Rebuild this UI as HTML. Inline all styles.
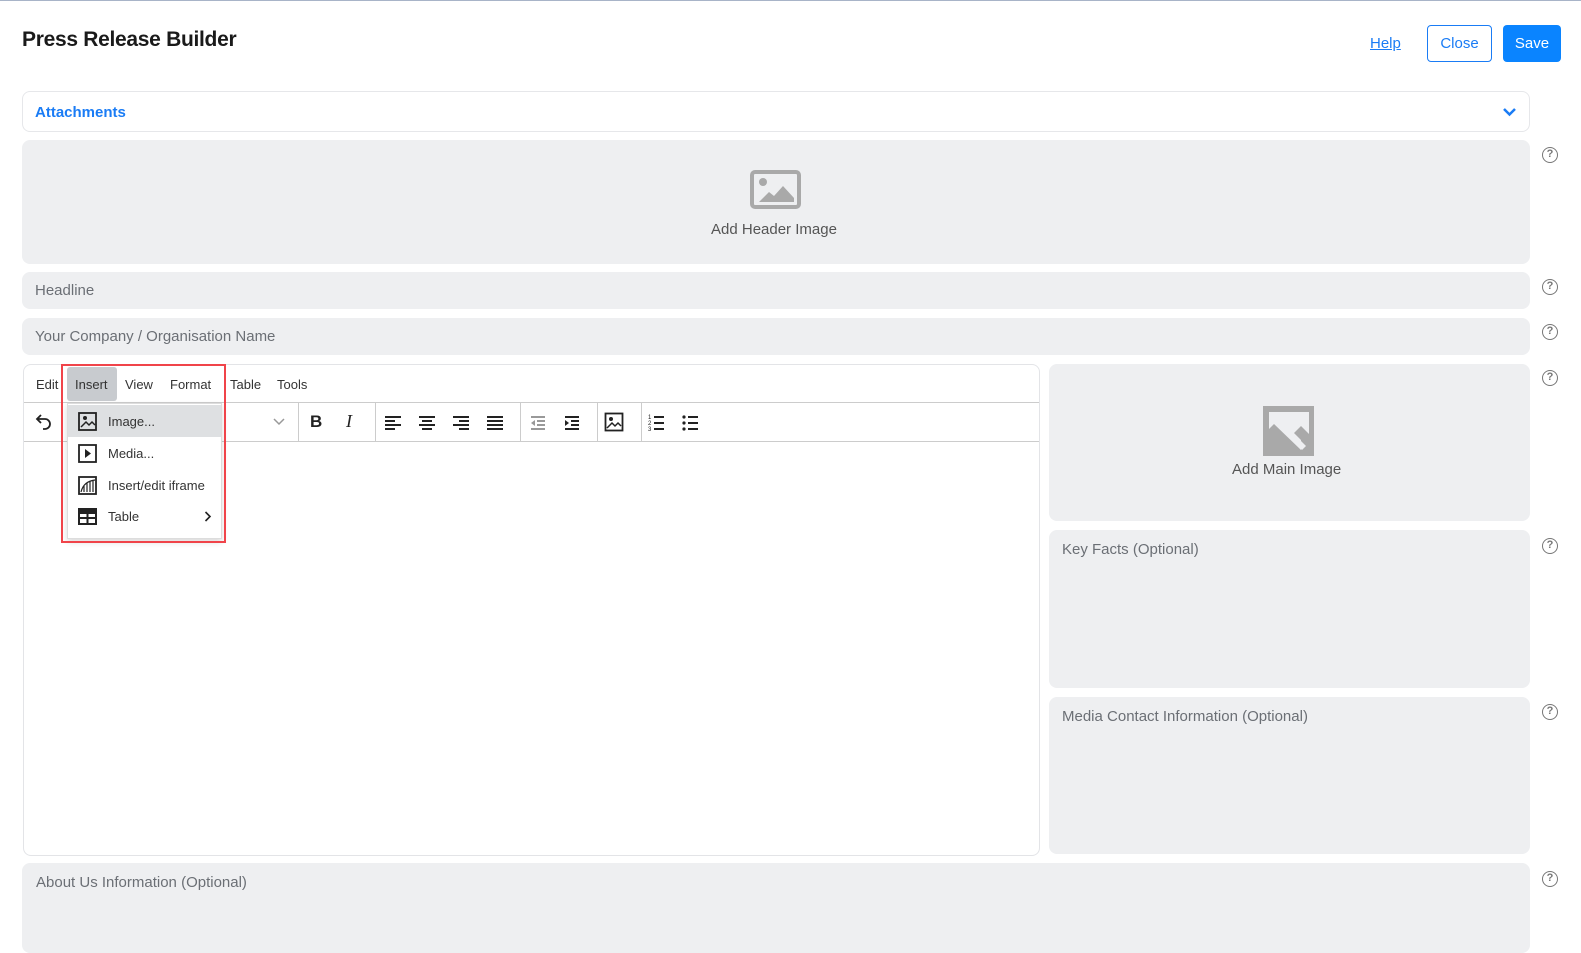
<!DOCTYPE html>
<html><head><meta charset="utf-8"><style>
*{box-sizing:border-box;margin:0;padding:0}
body{width:1581px;height:933px;background:#fff;font-family:"Liberation Sans",sans-serif;position:relative;overflow:hidden;color:#222}
.a{position:absolute}
.gbox{position:absolute;background:#eeeff1;border-radius:8px}
.ph{position:absolute;color:#6b6f75;font-size:15px}
.q{position:absolute;left:1542px;width:16px;height:16px;border:1.6px solid #777;border-radius:50%;font-size:11px;font-weight:bold;color:#777;text-align:center;line-height:13px}
.mb{position:absolute;top:377px;font-size:13px;color:#333}
.sep{position:absolute;top:403px;width:1px;height:38px;background:#ccc}
.ic{position:absolute;top:412px}
.mi{position:absolute;left:108px;font-size:13px;color:#333}
</style></head><body>
<div class="a" style="left:0;top:0;width:1581px;height:1px;background:#a8b4c8"></div>
<div class="a" style="left:22px;top:28px;font-size:21px;font-weight:bold;color:#1a1a1a;letter-spacing:-0.3px">Press Release Builder</div>
<div class="a" style="left:1370px;top:35px;font-size:15px;color:#1a7cf5;text-decoration:underline">Help</div>
<div class="a" style="left:1427px;top:25px;width:65px;height:37px;border:1px solid #1a7cf5;border-radius:4px;color:#1a7cf5;font-size:15px;text-align:center;line-height:35px">Close</div>
<div class="a" style="left:1503px;top:25px;width:58px;height:37px;background:#0a84ff;border-radius:4px;color:#fff;font-size:15px;text-align:center;line-height:37px">Save</div>

<div class="a" style="left:22px;top:91px;width:1508px;height:41px;border:1px solid #e6e7ea;border-radius:8px"></div>
<div class="a" style="left:35px;top:104px;font-size:15px;font-weight:bold;color:#1a7cf5">Attachments</div>
<svg class="a" style="left:1502px;top:107px" width="15" height="10" viewBox="0 0 15 10"><path d="M2 2l5.5 5.5L13 2" stroke="#1a7cf5" stroke-width="2.5" fill="none"/></svg>

<div class="gbox" style="left:22px;top:140px;width:1508px;height:124px"></div>
<svg class="a" style="left:750px;top:170px" width="52" height="40" viewBox="0 0 52 40"><rect x="2" y="2" width="47" height="35" rx="3" fill="none" stroke="#a9a9a9" stroke-width="4"/><circle cx="13" cy="12" r="4" fill="#a9a9a9"/><path d="M9 32l10-10 5 4 9-10 11 12v4z" fill="#a9a9a9"/></svg>
<div class="ph" style="left:711px;top:221px;color:#555">Add Header Image</div>
<div class="q" style="top:147px">?</div>

<div class="gbox" style="left:22px;top:272px;width:1508px;height:37px"></div>
<div class="ph" style="left:35px;top:282px">Headline</div>
<div class="q" style="top:279px">?</div>
<div class="gbox" style="left:22px;top:318px;width:1508px;height:37px"></div>
<div class="ph" style="left:35px;top:328px">Your Company / Organisation Name</div>
<div class="q" style="top:324px">?</div>

<div class="a" style="left:23px;top:364px;width:1017px;height:492px;border:1px solid #e3e4e7;border-radius:8px"></div>
<div class="a" style="left:24px;top:402px;width:1015px;height:1px;background:#ccc"></div>
<div class="a" style="left:24px;top:441px;width:1015px;height:1px;background:#ccc"></div>
<div class="mb" style="left:36px">Edit</div>
<div class="a" style="left:67px;top:367px;width:50px;height:34px;background:#c8cbcf;border-radius:3px"></div>
<div class="mb" style="left:75px">Insert</div>
<div class="mb" style="left:125px">View</div>
<div class="mb" style="left:170px">Format</div>
<div class="mb" style="left:230px">Table</div>
<div class="mb" style="left:277px">Tools</div>
<svg class="ic" style="left:34px" width="20" height="20" viewBox="0 0 20 20"><path d="M7 3L3 7l4 4M3 7h8a5 5 0 010 10H9" stroke="#222" stroke-width="1.8" fill="none"/></svg>
<svg class="a" style="left:273px;top:418px" width="12" height="8"><path d="M1 1l5 5 5-5" stroke="#999" stroke-width="1.5" fill="none"/></svg>
<div class="sep" style="left:298px"></div>
<div class="a" style="left:310px;top:412px;font-size:17px;font-weight:bold;color:#222">B</div>
<div class="a" style="left:346px;top:411px;font-size:18px;font-style:italic;font-family:'Liberation Serif',serif;color:#222">I</div>
<div class="sep" style="left:375px"></div>
<svg class="ic" style="left:385px" width="125" height="20"><g fill="#222"><rect x="0" y="4" width="16" height="2"/><rect x="0" y="8" width="10" height="2"/><rect x="0" y="12" width="16" height="2"/><rect x="0" y="16" width="10" height="2"/>
<rect x="34" y="4" width="16" height="2"/><rect x="37" y="8" width="10" height="2"/><rect x="34" y="12" width="16" height="2"/><rect x="37" y="16" width="10" height="2"/>
<rect x="68" y="4" width="16" height="2"/><rect x="74" y="8" width="10" height="2"/><rect x="68" y="12" width="16" height="2"/><rect x="74" y="16" width="10" height="2"/>
<rect x="102" y="4" width="16" height="2"/><rect x="102" y="8" width="16" height="2"/><rect x="102" y="12" width="16" height="2"/><rect x="102" y="16" width="16" height="2"/></g></svg>
<div class="sep" style="left:520px"></div>
<svg class="ic" style="left:529px" width="55" height="20"><g fill="#999"><rect x="2" y="4" width="14" height="2"/><rect x="8" y="8" width="8" height="2"/><rect x="8" y="12" width="8" height="2"/><rect x="2" y="16" width="14" height="2"/><path d="M6 8l-4 3 4 3z"/></g><g fill="#222"><rect x="36" y="4" width="14" height="2"/><rect x="42" y="8" width="8" height="2"/><rect x="42" y="12" width="8" height="2"/><rect x="36" y="16" width="14" height="2"/><path d="M36 8l4 3-4 3z"/></g></svg>
<div class="sep" style="left:597px"></div>
<svg class="ic" style="left:604px" width="20" height="20"><rect x="1.5" y="1.5" width="17" height="17" fill="none" stroke="#222" stroke-width="1.8"/><circle cx="7" cy="7" r="2" fill="#222"/><path d="M3 16l5-5 3 3 3-3 3 3" stroke="#222" stroke-width="1.5" fill="none"/></svg>
<div class="sep" style="left:641px"></div>
<svg class="ic" style="left:648px" width="55" height="20"><g fill="#222"><text x="0" y="7" font-size="6" font-family="Liberation Sans">1</text><text x="0" y="13" font-size="6" font-family="Liberation Sans">2</text><text x="0" y="19" font-size="6" font-family="Liberation Sans">3</text><rect x="6" y="4" width="10" height="2"/><rect x="6" y="10" width="10" height="2"/><rect x="6" y="16" width="10" height="2"/>
<circle cx="36" cy="5" r="1.6"/><circle cx="36" cy="11" r="1.6"/><circle cx="36" cy="17" r="1.6"/><rect x="40" y="4" width="10" height="2"/><rect x="40" y="10" width="10" height="2"/><rect x="40" y="16" width="10" height="2"/></g></svg>

<div class="a" style="left:67px;top:403px;width:155px;height:136px;background:#fff;border:1px solid #ddd;box-shadow:0 3px 6px rgba(0,0,0,.15)"></div>
<div class="a" style="left:68px;top:405px;width:153px;height:32px;background:#dee0e2"></div>
<svg class="a" style="left:78px;top:412px" width="19" height="19"><rect x="1" y="1" width="17" height="17" fill="none" stroke="#222" stroke-width="1.8"/><circle cx="7" cy="6" r="2" fill="#222"/><path d="M3 15l5-5 3 3 3-3 3 3" stroke="#222" stroke-width="1.5" fill="none"/></svg>
<div class="mi" style="top:414px">Image...</div>
<svg class="a" style="left:78px;top:444px" width="19" height="19"><rect x="1" y="1" width="17" height="17" fill="none" stroke="#222" stroke-width="1.8"/><path d="M7 5l6 4.5L7 14z" fill="#222"/></svg>
<div class="mi" style="top:446px">Media...</div>
<svg class="a" style="left:78px;top:476px" width="19" height="19"><rect x="1" y="1" width="17" height="17" fill="none" stroke="#222" stroke-width="1.8"/><path d="M3 16C5 8 10 5 17 4M6 16V10M9 16V7M12 16V5M15 16V4" stroke="#222" stroke-width="1.2" fill="none"/></svg>
<div class="mi" style="top:478px">Insert/edit iframe</div>
<svg class="a" style="left:78px;top:508px" width="19" height="17"><rect x="1" y="1" width="17" height="15" fill="none" stroke="#222" stroke-width="2"/><rect x="1" y="1" width="17" height="5" fill="#222"/><path d="M1 10h17M9.5 1v15" stroke="#222" stroke-width="2"/></svg>
<div class="mi" style="top:509px">Table</div>
<svg class="a" style="left:204px;top:511px" width="8" height="11"><path d="M1.5 1l4.5 4.5L1.5 10" stroke="#222" stroke-width="1.6" fill="none"/></svg>
<div class="a" style="left:61px;top:364px;width:165px;height:179px;border:2.5px solid #f0444a"></div>

<div class="gbox" style="left:1049px;top:364px;width:481px;height:157px"></div>
<svg class="a" style="left:1263px;top:406px" width="51" height="50"><rect width="51" height="50" fill="#a9a9a9"/><path d="M6 6h40v22l-8-8-7 7 7 7v10L11 18 6 23z" fill="#eeeff1"/><path d="M10 16L39 44l4-4-19-19" fill="#eeeff1"/></svg>
<div class="ph" style="left:1232px;top:461px;color:#555">Add Main Image</div>
<div class="q" style="top:370px">?</div>
<div class="gbox" style="left:1049px;top:530px;width:481px;height:158px"></div>
<div class="ph" style="left:1062px;top:541px">Key Facts (Optional)</div>
<div class="q" style="top:538px">?</div>
<div class="gbox" style="left:1049px;top:697px;width:481px;height:157px"></div>
<div class="ph" style="left:1062px;top:708px">Media Contact Information (Optional)</div>
<div class="q" style="top:704px">?</div>
<div class="gbox" style="left:22px;top:863px;width:1508px;height:90px"></div>
<div class="ph" style="left:36px;top:874px">About Us Information (Optional)</div>
<div class="q" style="top:871px">?</div>
</body></html>
